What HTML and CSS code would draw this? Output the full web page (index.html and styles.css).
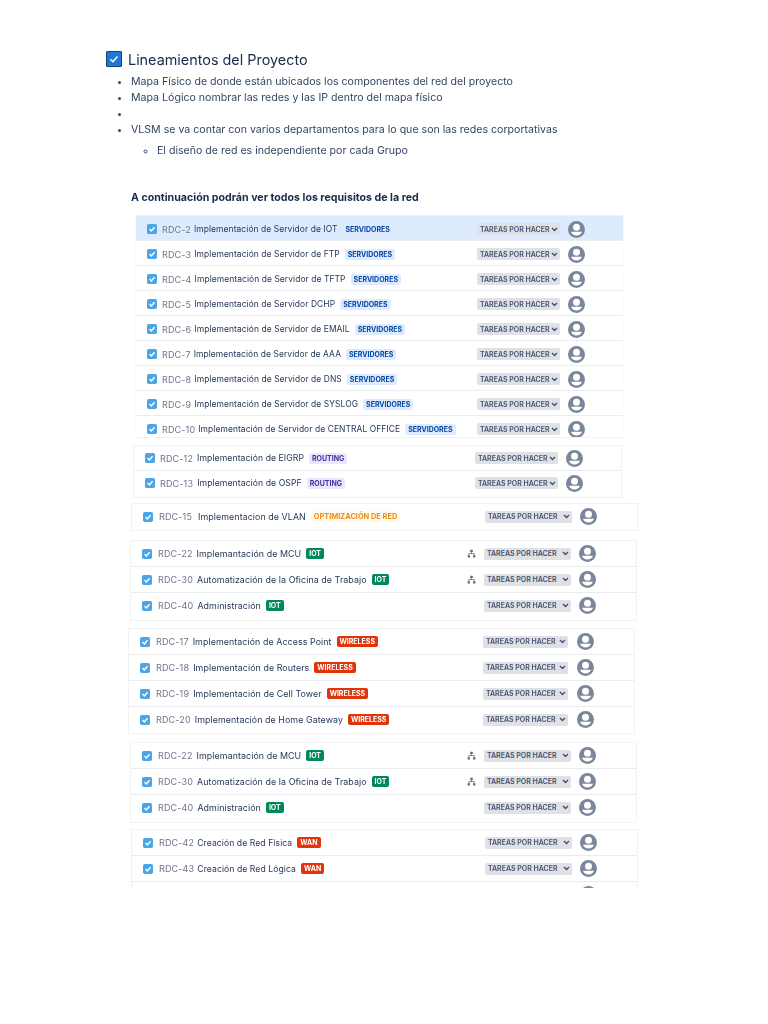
FILE: index.html
```html
<!DOCTYPE html>
<html lang="es">
<head>
<meta charset="utf-8">
<title>Lineamientos del Proyecto</title>
<link rel="stylesheet" href="styles.css">
</head>
<body>
<svg class="defs" width="0" height="0" aria-hidden="true">
  <symbol id="check" viewBox="0 0 11 11"><rect width="11" height="11" rx="2" fill="#4ba5e6"/><path d="M2.8 5.6l2 2 3.5-4" fill="none" stroke="#fff" stroke-width="1.6"/></symbol>
  <symbol id="user" viewBox="0 0 17 17"><circle cx="8.5" cy="8.5" r="8.5" fill="#7a8699"/><circle cx="8.5" cy="6.2" r="3.5" fill="#fff"/><path d="M3 10.7h11a5.9 5.9 0 0 1-11 0z" fill="#fff"/></symbol>
  <symbol id="chev" viewBox="0 0 7 5"><path d="M1 1l2.5 2.5L6 1" fill="none" stroke="#42526e" stroke-width="1.4"/></symbol>
  <symbol id="tree" viewBox="0 0 9 9"><path d="M3.2 0.8h2.6v2.2H3.2zM0.6 6.2h2.4v2.2H0.6zM6 6.2h2.4v2.2H6z" fill="#5e6c84"/><path d="M4.5 3v1.6M1.8 6.2V4.6h5.4v1.6" fill="none" stroke="#5e6c84" stroke-width=".8"/></symbol>
</svg>
<main class="page">
  <h1 class="title"><span class="bigcheck"><svg viewBox="0 0 12 12" width="12" height="12"><path d="M2.4 6.2l2.5 2.5 4.6-5.2" fill="none" stroke="#fff" stroke-width="1.5"/></svg></span>Lineamientos del Proyecto</h1>
  <ul class="bullets">
    <li>Mapa Físico de donde están ubicados los componentes del red del proyecto</li>
    <li>Mapa Lógico nombrar las redes y las IP dentro del mapa físico</li>
    <li>&nbsp;</li>
    <li>VLSM se va contar con varios departamentos para lo que son las redes corportativas
      <ul><li>El diseño de red es independiente por cada Grupo</li></ul>
    </li>
  </ul>
  <h2 class="sub">A continuación podrán ver todos los requisitos de la red</h2>

  <section class="group g1">
    <div class="row sel"><svg class="cb"><use href="#check"/></svg><span class="key">RDC-2</span><span class="name">Implementación de Servidor de IOT</span><span class="tag srv">SERVIDORES</span><span class="end"><span class="status">TAREAS POR HACER<svg class="cv"><use href="#chev"/></svg></span><svg class="av"><use href="#user"/></svg></span></div>
    <div class="row"><svg class="cb"><use href="#check"/></svg><span class="key">RDC-3</span><span class="name">Implementación de Servidor de FTP</span><span class="tag srv">SERVIDORES</span><span class="end"><span class="status">TAREAS POR HACER<svg class="cv"><use href="#chev"/></svg></span><svg class="av"><use href="#user"/></svg></span></div>
    <div class="row"><svg class="cb"><use href="#check"/></svg><span class="key">RDC-4</span><span class="name">Implementación de Servidor de TFTP</span><span class="tag srv">SERVIDORES</span><span class="end"><span class="status">TAREAS POR HACER<svg class="cv"><use href="#chev"/></svg></span><svg class="av"><use href="#user"/></svg></span></div>
    <div class="row"><svg class="cb"><use href="#check"/></svg><span class="key">RDC-5</span><span class="name">Implementación de Servidor DCHP</span><span class="tag srv">SERVIDORES</span><span class="end"><span class="status">TAREAS POR HACER<svg class="cv"><use href="#chev"/></svg></span><svg class="av"><use href="#user"/></svg></span></div>
    <div class="row"><svg class="cb"><use href="#check"/></svg><span class="key">RDC-6</span><span class="name">Implementación de Servidor de EMAIL</span><span class="tag srv">SERVIDORES</span><span class="end"><span class="status">TAREAS POR HACER<svg class="cv"><use href="#chev"/></svg></span><svg class="av"><use href="#user"/></svg></span></div>
    <div class="row"><svg class="cb"><use href="#check"/></svg><span class="key">RDC-7</span><span class="name">Implementación de Servidor de AAA</span><span class="tag srv">SERVIDORES</span><span class="end"><span class="status">TAREAS POR HACER<svg class="cv"><use href="#chev"/></svg></span><svg class="av"><use href="#user"/></svg></span></div>
    <div class="row"><svg class="cb"><use href="#check"/></svg><span class="key">RDC-8</span><span class="name">Implementación de Servidor de DNS</span><span class="tag srv">SERVIDORES</span><span class="end"><span class="status">TAREAS POR HACER<svg class="cv"><use href="#chev"/></svg></span><svg class="av"><use href="#user"/></svg></span></div>
    <div class="row"><svg class="cb"><use href="#check"/></svg><span class="key">RDC-9</span><span class="name">Implementación de Servidor de SYSLOG</span><span class="tag srv">SERVIDORES</span><span class="end"><span class="status">TAREAS POR HACER<svg class="cv"><use href="#chev"/></svg></span><svg class="av"><use href="#user"/></svg></span></div>
    <div class="row"><svg class="cb"><use href="#check"/></svg><span class="key">RDC-10</span><span class="name">Implementación de Servidor de CENTRAL OFFICE</span><span class="tag srv">SERVIDORES</span><span class="end"><span class="status">TAREAS POR HACER<svg class="cv"><use href="#chev"/></svg></span><svg class="av"><use href="#user"/></svg></span></div>
  </section>

  <section class="group g2">
    <div class="row"><svg class="cb"><use href="#check"/></svg><span class="key">RDC-12</span><span class="name">Implementación de EIGRP</span><span class="tag rou">ROUTING</span><span class="end"><span class="status">TAREAS POR HACER<svg class="cv"><use href="#chev"/></svg></span><svg class="av"><use href="#user"/></svg></span></div>
    <div class="row"><svg class="cb"><use href="#check"/></svg><span class="key">RDC-13</span><span class="name">Implementación de OSPF</span><span class="tag rou">ROUTING</span><span class="end"><span class="status">TAREAS POR HACER<svg class="cv"><use href="#chev"/></svg></span><svg class="av"><use href="#user"/></svg></span></div>
  </section>

  <section class="group g3">
    <div class="row"><svg class="cb"><use href="#check"/></svg><span class="key">RDC-15</span><span class="name">Implementacion de VLAN</span><span class="tag opt">OPTIMIZACIÓN DE RED</span><span class="end"><span class="status">TAREAS POR HACER<svg class="cv"><use href="#chev"/></svg></span><svg class="av"><use href="#user"/></svg></span></div>
  </section>

  <section class="group g4">
    <div class="row"><svg class="cb"><use href="#check"/></svg><span class="key">RDC-22</span><span class="name">Implemantación de MCU</span><span class="tag iot">IOT</span><span class="end"><svg class="tr"><use href="#tree"/></svg><span class="status">TAREAS POR HACER<svg class="cv"><use href="#chev"/></svg></span><svg class="av"><use href="#user"/></svg></span></div>
    <div class="row"><svg class="cb"><use href="#check"/></svg><span class="key">RDC-30</span><span class="name">Automatización de la Oficina de Trabajo</span><span class="tag iot">IOT</span><span class="end"><svg class="tr"><use href="#tree"/></svg><span class="status">TAREAS POR HACER<svg class="cv"><use href="#chev"/></svg></span><svg class="av"><use href="#user"/></svg></span></div>
    <div class="row"><svg class="cb"><use href="#check"/></svg><span class="key">RDC-40</span><span class="name">Administración</span><span class="tag iot">IOT</span><span class="end"><span class="status">TAREAS POR HACER<svg class="cv"><use href="#chev"/></svg></span><svg class="av"><use href="#user"/></svg></span></div>
  </section>

  <section class="group g5">
    <div class="row"><svg class="cb"><use href="#check"/></svg><span class="key">RDC-17</span><span class="name">Implementación de Access Point</span><span class="tag red">WIRELESS</span><span class="end"><span class="status">TAREAS POR HACER<svg class="cv"><use href="#chev"/></svg></span><svg class="av"><use href="#user"/></svg></span></div>
    <div class="row"><svg class="cb"><use href="#check"/></svg><span class="key">RDC-18</span><span class="name">Implementación de Routers</span><span class="tag red">WIRELESS</span><span class="end"><span class="status">TAREAS POR HACER<svg class="cv"><use href="#chev"/></svg></span><svg class="av"><use href="#user"/></svg></span></div>
    <div class="row"><svg class="cb"><use href="#check"/></svg><span class="key">RDC-19</span><span class="name">Implementación de Cell Tower</span><span class="tag red">WIRELESS</span><span class="end"><span class="status">TAREAS POR HACER<svg class="cv"><use href="#chev"/></svg></span><svg class="av"><use href="#user"/></svg></span></div>
    <div class="row"><svg class="cb"><use href="#check"/></svg><span class="key">RDC-20</span><span class="name">Implementación de Home Gateway</span><span class="tag red">WIRELESS</span><span class="end"><span class="status">TAREAS POR HACER<svg class="cv"><use href="#chev"/></svg></span><svg class="av"><use href="#user"/></svg></span></div>
  </section>

  <section class="group g6">
    <div class="row"><svg class="cb"><use href="#check"/></svg><span class="key">RDC-22</span><span class="name">Implemantación de MCU</span><span class="tag iot">IOT</span><span class="end"><svg class="tr"><use href="#tree"/></svg><span class="status">TAREAS POR HACER<svg class="cv"><use href="#chev"/></svg></span><svg class="av"><use href="#user"/></svg></span></div>
    <div class="row"><svg class="cb"><use href="#check"/></svg><span class="key">RDC-30</span><span class="name">Automatización de la Oficina de Trabajo</span><span class="tag iot">IOT</span><span class="end"><svg class="tr"><use href="#tree"/></svg><span class="status">TAREAS POR HACER<svg class="cv"><use href="#chev"/></svg></span><svg class="av"><use href="#user"/></svg></span></div>
    <div class="row"><svg class="cb"><use href="#check"/></svg><span class="key">RDC-40</span><span class="name">Administración</span><span class="tag iot">IOT</span><span class="end"><span class="status">TAREAS POR HACER<svg class="cv"><use href="#chev"/></svg></span><svg class="av"><use href="#user"/></svg></span></div>
  </section>

  <section class="group g7">
    <div class="row"><svg class="cb"><use href="#check"/></svg><span class="key">RDC-42</span><span class="name">Creación de Red Física</span><span class="tag red">WAN</span><span class="end"><span class="status">TAREAS POR HACER<svg class="cv"><use href="#chev"/></svg></span><svg class="av"><use href="#user"/></svg></span></div>
    <div class="row"><svg class="cb"><use href="#check"/></svg><span class="key">RDC-43</span><span class="name">Creación de Red Lógica</span><span class="tag red">WAN</span><span class="end"><span class="status">TAREAS POR HACER<svg class="cv"><use href="#chev"/></svg></span><svg class="av"><use href="#user"/></svg></span></div>
    <div class="row"><span class="end"><svg class="av"><use href="#user"/></svg></span></div>
  </section>
</main>
</body>
</html>
```

FILE: styles.css
```css
* { box-sizing: border-box; }
html, body { margin: 0; background: #fff; }
body { font-family: Inter, "Liberation Sans", sans-serif; color: #172b4d; }
.defs { position: absolute; }
.page { padding: 50px 0 0; height: 1024px; overflow: hidden; filter: blur(0.4px); }

.title { display: flex; align-items: center; gap: 6px; margin: 0 0 0 106px; height: 18px; font-size: 14.4px; font-weight: 400; color: #172b4d; }
.bigcheck { display: flex; align-items: center; justify-content: center; width: 16px; height: 16px; background: #1f78d6; border: 1.5px solid #17426f; border-radius: 1px; }

.bullets { margin: 6px 0 0; padding: 0 0 0 131px; font-size: 10.6px; line-height: 16px; color: #344563; }
.bullets ul { margin: 5px 0 0; padding: 0 0 0 26px; list-style: circle; }
.sub { margin: 31px 0 0 131px; height: 16px; font-size: 10.63px; line-height: 16px; font-weight: 700; color: #172b4d; }

.group { border: 1px solid #f1f2f4; background: #fff; }
.row { display: flex; align-items: center; height: 25px; border-bottom: 1px solid #ebecf0; font-size: 9px; }
.row:last-child { border-bottom-color: transparent; }
.sel { background: #deebff; }
.cb { flex: none; width: 10px; height: 10px; margin-right: 5px; }
.key { flex: none; margin-right: 4px; color: #6b778c; letter-spacing: .15px; }
.name { flex: none; margin-right: 5px; color: #253858; font-size: 8.85px; letter-spacing: .08px; }
.tag { flex: none; padding: 0 3px; height: 11px; border-radius: 2px; font-size: 7px; line-height: 11px; font-weight: 700; }
.srv { background: #deebff; color: #0747a6; }
.rou { background: #eae6ff; color: #403294; }
.opt { background: #fffaf0; color: #f18d13; font-size: 7.4px; }
.iot { background: #00875a; color: #fff; }
.red { background: #de350b; color: #fff; }
.end { display: flex; align-items: center; margin-left: auto; }
.tr { width: 9px; height: 9px; margin-right: 8px; }
.status { display: flex; align-items: center; justify-content: space-between; width: 83px; height: 12px; padding: 0 2px 0 3px; margin-right: 8px; border-radius: 2px; background: #dfe1e6; color: #42526e; font-size: 7px; font-weight: 600; white-space: nowrap; }
.cv { width: 7px; height: 5px; }
.av { width: 17px; height: 17px; }

.g1 { margin: 9px 0 0 135px; width: 489px; height: 223px; overflow: hidden; border-left-color: #fafbfc; border-right-color: #fafbfc; }
.g1 .row { padding: 2px 38px 0 11px; }
.g1 .key { margin-right: 3px; }
.g1 .name { font-size: 8.45px; }
.g2 .name { font-size: 8.65px; }
.g2 { margin: 7px 0 0 133px; width: 489px; height: 53px; }
.g2 .row { padding: 0 38px 0 11px; }
.g3 { margin: 5px 0 0 131px; width: 507px; height: 28px; }
.g3 .row { height: 26px; padding: 0 40px 0 11px; }
.g3 .cb, .g4 .cb, .g5 .cb, .g6 .cb, .g7 .cb { margin-right: 6px; }
.g3 .key { margin-right: 6px; }
.g3 .status, .g4 .status, .g6 .status, .g7 .status { width: 87px; }
.g4 { margin: 9px 0 0 130px; width: 507px; height: 81px; }
.g4 .row, .g5 .row, .g6 .row, .g7 .row { height: 26px; padding: 0 40px 0 11px; }
.g5 { margin: 7px 0 0 128px; width: 507px; height: 106px; }
.g5 .status { width: 85px; margin-right: 9px; }
.g6 { margin: 8px 0 0 130px; width: 507px; height: 81px; }
.g7 { margin: 6px 0 0 131px; width: 507px; height: 59px; overflow: hidden; border-bottom: 0; }
.g7 .key { margin-right: 3px; }
.g7 .name { font-size: 8.6px; }
```
